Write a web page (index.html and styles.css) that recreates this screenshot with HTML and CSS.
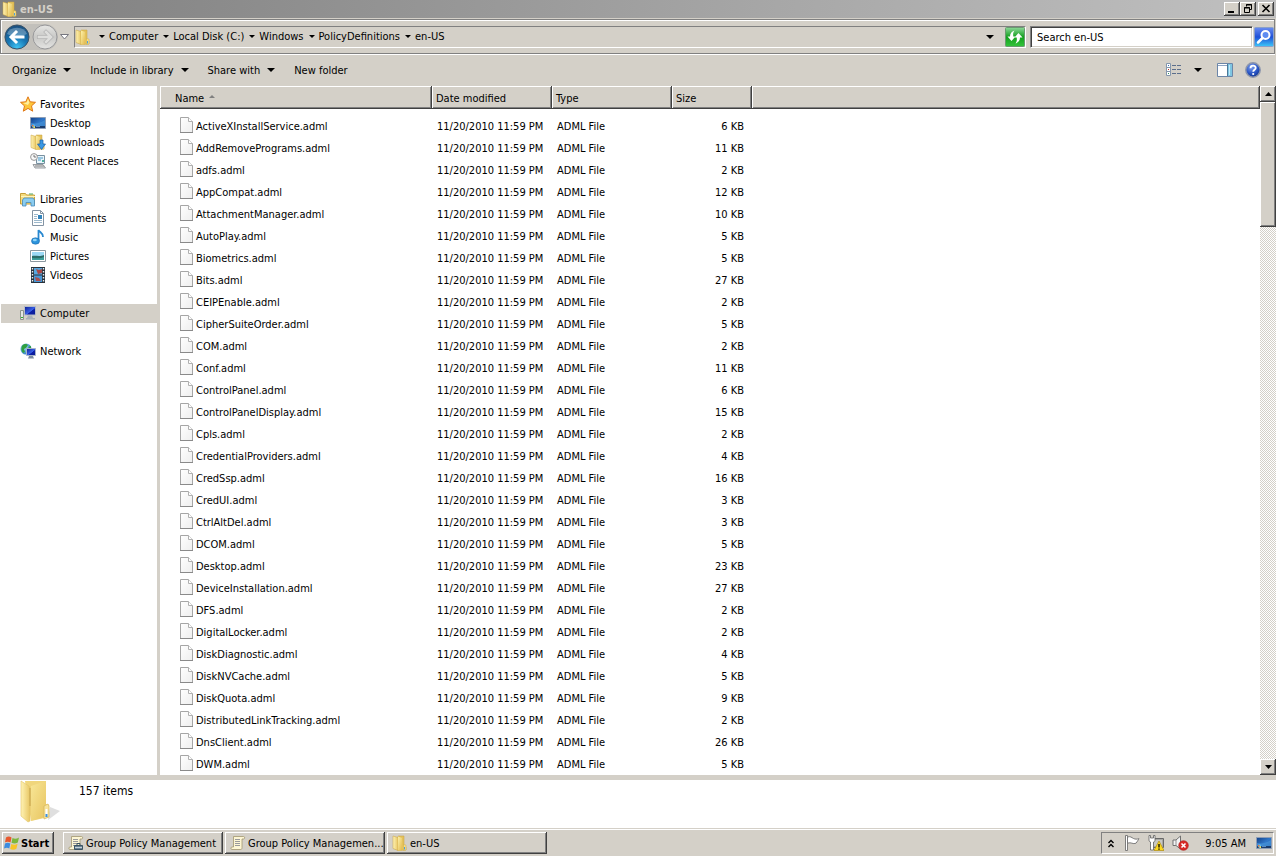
FILE: index.html
```html
<!DOCTYPE html>
<html lang="en">
<head>
<meta charset="utf-8">
<title>en-US</title>
<link rel="stylesheet" href="styles.css">
</head>
<body>
<svg class="defs" aria-hidden="true">
  <defs>
    <linearGradient id="gold" x1="0" y1="0" x2="1" y2="1"><stop offset="0" stop-color="#fdf1a8"/><stop offset="1" stop-color="#e2b94e"/></linearGradient>
    <linearGradient id="goldSide" x1="0" y1="0" x2="1" y2="0"><stop offset="0" stop-color="#fff3b4"/><stop offset="1" stop-color="#e8c765"/></linearGradient>
    <linearGradient id="paper" x1="0" y1="0" x2="1" y2="1"><stop offset="0" stop-color="#fff"/><stop offset="1" stop-color="#eeeeee"/></linearGradient>
    <linearGradient id="blueScreen" x1="0" y1="0" x2="1" y2="1"><stop offset="0" stop-color="#123f86"/><stop offset=".5" stop-color="#2f76c8"/><stop offset="1" stop-color="#174f9c"/></linearGradient>
    <linearGradient id="monitor" x1="0" y1="0" x2="1" y2="1"><stop offset="0" stop-color="#0a1a90"/><stop offset=".55" stop-color="#3a62e8"/><stop offset=".6" stop-color="#0c20a8"/><stop offset="1" stop-color="#0a1a90"/></linearGradient>
    <radialGradient id="backFill" cx=".5" cy=".95" r=".95"><stop offset="0" stop-color="#3fc4f4"/><stop offset=".45" stop-color="#1877b4"/><stop offset="1" stop-color="#1c4d7c"/></radialGradient>
    <linearGradient id="fwdFill" x1="0" y1="0" x2="0" y2="1"><stop offset="0" stop-color="#e6e6e4"/><stop offset=".5" stop-color="#c9c9c7"/><stop offset="1" stop-color="#e4e4e2"/></linearGradient>
    <linearGradient id="searchFill" x1="0" y1="0" x2="0" y2="1"><stop offset="0" stop-color="#6a8cf0"/><stop offset=".5" stop-color="#1e50d8"/><stop offset="1" stop-color="#3cc8f8"/></linearGradient>
    <linearGradient id="refreshFill" x1="0" y1="0" x2="0" y2="1"><stop offset="0" stop-color="#8ed89a"/><stop offset=".5" stop-color="#12a01c"/><stop offset="1" stop-color="#34c43c"/></linearGradient>
    <radialGradient id="helpFill" cx=".4" cy=".3" r=".8"><stop offset="0" stop-color="#7d9ff0"/><stop offset=".6" stop-color="#2450c0"/><stop offset="1" stop-color="#12307c"/></radialGradient>
    <radialGradient id="globe" cx=".35" cy=".35" r=".8"><stop offset="0" stop-color="#a8e0f8"/><stop offset="1" stop-color="#1468b8"/></radialGradient>
  </defs>
  <symbol id="doc" viewBox="0 0 16 16"><path d="M2.500.5h8l4 4v11h-12z" fill="url(#paper)" stroke="#a6a6a6"/><path d="M2 15.500h13" stroke="#8a8a8a"/><path d="M10.500.500v4h4" fill="#fff" stroke="#b0b0b0"/></symbol>
  <symbol id="folder" viewBox="0 0 16 16"><path d="M6 1h6v10l2 1v3l-8 .5z" fill="#e4c25c" stroke="#c9a33c" stroke-width=".5"/><path d="M1 1l5 1.500v13L1 13.500z" fill="url(#goldSide)" stroke="#c9a33c" stroke-width=".5"/><path d="M6 1.500L10 3v12.500H6z" fill="url(#gold)"/><path d="M11.500 9.500l2.500.5v5l-2.500.5z" fill="#f6de86" stroke="#c9a33c" stroke-width=".4"/><path d="M12.500 12v2.500" stroke="#4aa0e0"/></symbol>
  <symbol id="desktop" viewBox="0 0 16 16"><path d="M.5 2.500h15v11H.5z" fill="url(#blueScreen)" stroke="#8d9db5"/><path d="M1 8c5 1 9 0 14-3v6H1z" fill="#4a98dc" opacity=".65"/><path d="M1 11h14v2H1z" fill="#1b3c6c"/><path d="M6 11.500h4" stroke="#5b8bc0"/><circle cx="3.500" cy="11" r="1.800" fill="#58b8f0"/><path d="M2 10h1.500v1.500H2z" fill="#f07030"/><path d="M3.500 11.500H5V13H3.500z" fill="#ffe040"/></symbol>
  <symbol id="scroll" viewBox="0 0 16 16"><path d="M3.500 1.500h10c1.500 0 1.500 2.500 0 2.500H12v8.500c0 2-1 2-2 2H2c-1.500 0-1.500-2.500 0-2.500h1.500z" fill="#fdf6d4" stroke="#a19770" stroke-width=".8"/><path d="M5 4.500h5M5 6.500h5M5 8.500h5M5 10.500h5" stroke="#8f9095" stroke-width=".9"/></symbol>
  <symbol id="tri" viewBox="0 0 8 4"><path d="M0 0h8L4 4z" fill="#000"/></symbol>
</svg>

<header class="titlebar">
  <svg class="icon"><use href="#folder"/></svg>
  <h1 class="title">en-US</h1>
  <div class="controls">
    <button class="raised ctl" aria-label="Minimize"><svg width="10" height="9"><path d="M1 7h6v2H1z"/></svg></button>
    <button class="raised ctl" aria-label="Restore"><svg width="10" height="9"><path d="M3.500 2.500v-2h5v5h-2M3 1h6M1.500 3.500h5v5h-5zM1 4h6" fill="none" stroke="#000"/></svg></button>
    <button class="raised ctl ctl-close" aria-label="Close"><svg width="10" height="9"><path d="M1.500 1l7 7M8.500 1l-7 7" stroke="#000" stroke-width="1.600"/></svg></button>
  </div>
</header>

<nav class="navbar" aria-label="Address">
  <div class="travel">
    <button class="plain" aria-label="Back"><svg width="26" height="26"><circle cx="13" cy="13" r="12" fill="url(#backFill)" stroke="#3c5468"/><path d="M3 10a10.500 9 0 0 1 20 0q-10 5-20 0" fill="#fff" opacity=".28"/><path d="M7 13l5-5M7 13l5 5M8 13h11" fill="none" stroke="#fff" stroke-width="3" stroke-linecap="square"/></svg></button>
    <button class="plain" aria-label="Forward"><svg width="26" height="26"><circle cx="13" cy="13" r="12" fill="url(#fwdFill)" stroke="#98989a"/><path d="M19 13l-5-5M19 13l-5 5M18 13H7" fill="none" stroke="#b4b4b4" stroke-width="4" stroke-linecap="square"/><path d="M19 13l-5-5M19 13l-5 5M18 13H7" fill="none" stroke="#dededc" stroke-width="2.500" stroke-linecap="square"/></svg></button>
  </div>
  <button class="plain" aria-label="Recent pages"><svg width="9" height="6"><path d="M.5.5h8l-4 4.500z" fill="#fff" stroke="#77777f"/></svg></button>
  <div class="address">
    <svg class="icon"><use href="#folder"/></svg>
    <ol class="crumbs">
      <li><a href="#">Computer</a></li>
      <li><a href="#">Local Disk (C:)</a></li>
      <li><a href="#">Windows</a></li>
      <li><a href="#">PolicyDefinitions</a></li>
      <li><a href="#">en-US</a></li>
    </ol>
    <button class="plain" aria-label="Previous locations"><svg class="tri"><use href="#tri"/></svg></button>
    <button class="plain" aria-label="Refresh"><svg width="20" height="20"><rect x=".5" y=".5" width="19" height="19" rx="1" fill="url(#refreshFill)" stroke="#6a9a70"/><path d="M6.500 14L2.500 9.500h2.500c0-3 1.500-5 4.500-6-1.500 2-1.500 3.500-1.200 6h2.200z" fill="#fff"/><path d="M13.500 6l4 4.500H15c0 3-1.500 5-4.500 6 1.500-2 1.500-3.500 1.200-6H9.500z" fill="#fff"/></svg></button>
  </div>
  <form class="search">
    <input class="search-box" type="text" aria-label="Search en-US" placeholder="Search en-US">
    <button class="plain" type="button" aria-label="Search"><svg width="20" height="20"><rect x=".5" y=".5" width="19" height="19" rx="1" fill="url(#searchFill)" stroke="#8aa0c8"/><circle cx="11.500" cy="8" r="4" fill="#5e8cf0" stroke="#fff" stroke-width="2"/><path d="M8.500 11l-4.500 4.500" stroke="#fff" stroke-width="2.500" stroke-linecap="round"/></svg></button>
  </form>
</nav>

<div class="toolbar" role="toolbar">
  <button class="plain cmd">Organize <svg class="tri"><use href="#tri"/></svg></button>
  <button class="plain cmd">Include in library <svg class="tri"><use href="#tri"/></svg></button>
  <button class="plain cmd">Share with <svg class="tri"><use href="#tri"/></svg></button>
  <button class="plain cmd">New folder</button>
  <div class="views">
    <button class="plain" aria-label="Change view"><svg width="16" height="14"><path d="M.5.5h4v4h-4zM.5 4.500h4v4h-4zM.5 8.500h4v4h-4z" fill="#fff" stroke="#8496ac"/><path d="M2 2h1v1H2z" fill="#3070c0"/><path d="M2 6h1v1H2z" fill="#c03020"/><path d="M2 10h1v1H2z" fill="#309060"/><path d="M6 2.500h4M11 2.500h4M6 6.500h4M11 6.500h4M6 10.500h4M11 10.500h4" stroke="#5c6f8c"/></svg></button>
    <button class="plain" aria-label="More view options"><svg class="tri"><use href="#tri"/></svg></button>
    <button class="plain preview" aria-label="Preview pane"><svg width="16" height="14"><path d="M.5.5h15v13H.5z" fill="#fff" stroke="#6c86a8"/><path d="M1 2.500h9" stroke="#8fa6c4"/><path d="M10.500 1H15v12h-4.500z" fill="#7fc6e2"/><path d="M10.500 1v12" stroke="#4c7898"/><path d="M12.500 2v10" stroke="#c4eafa"/></svg></button>
    <button class="plain" aria-label="Help"><svg width="16" height="16"><circle cx="8" cy="8" r="7.200" fill="url(#helpFill)" stroke="#8d96ac" stroke-width="1.500"/><path d="M5.500 6.200c0-3.400 5.200-3.200 5.200-.3 0 1.900-2.500 1.900-2.500 3.900" fill="none" stroke="#fff" stroke-width="1.800"/><circle cx="8.200" cy="12" r="1.100" fill="#fff"/></svg></button>
  </div>
</div>

<main class="main">
  <aside class="sidebar">
    <ul class="tree">
      <li><a href="#"><svg class="icon" viewBox="0 0 16 16"><path d="M8 .8l2.200 5 5.300.5-4 3.600 1.200 5.300L8 12.400l-4.700 2.800 1.200-5.300-4-3.600 5.300-.5z" fill="#fdc63c" stroke="#e07818"/><path d="M8 3l1.400 3.600L8 9 3 7l3.600-.6z" fill="#fff0a0"/></svg>Favorites</a>
        <ul>
          <li><a href="#"><svg class="icon"><use href="#desktop"/></svg>Desktop</a></li>
          <li><a href="#"><svg class="icon" viewBox="0 0 16 16"><use href="#folder"/><path d="M10 6h3v4h2.500l-4 5.500-4-5.500H10z" fill="#3a98e4" stroke="#1c60a8" stroke-width=".7"/></svg>Downloads</a></li>
          <li><a href="#"><svg class="icon" viewBox="0 0 16 16"><path d="M6.500 2.500h8v8h-8z" fill="#e8f4fa" stroke="#7890a0"/><path d="M8 5h5M8 7h3" stroke="#4898c8"/><path d="M12 7h2v2h-2z" fill="#50b0a0"/><path d="M3 11.500h10l2.500 3.500H5z" fill="#dfe2e4" stroke="#84898e" stroke-width=".8"/><path d="M5 13h9" stroke="#888"/><circle cx="4" cy="4" r="3.400" fill="#f8f8f8" stroke="#989898"/><path d="M4 2v2h2" fill="none" stroke="#555" stroke-width=".8"/></svg>Recent Places</a></li>
        </ul>
      </li>
      <li><a href="#"><svg class="icon" viewBox="0 0 16 16"><path d="M.5 2.500h5l1 1.500h8v9h-14z" fill="#f4dc80" stroke="#c8a038"/><path d="M1 5.500h14" stroke="#fff4bc"/><path d="M9 3h4" stroke="#50a860"/><path d="M2.500 15V9l1.500-2h9l1.500 2v6H11v-3.500H6V15z" fill="#8accf0" stroke="#4688b8" stroke-width=".8"/></svg>Libraries</a>
        <ul>
          <li><a href="#"><svg class="icon" viewBox="0 0 16 16"><path d="M2.500.5h8l3 3v12h-11z" fill="#fff" stroke="#8494a4"/><path d="M10.500.5v3h3" fill="none" stroke="#8494a4"/><path d="M4 4.500h4M4 6.500h3M4 8.500h3M4 10.500h8M4 12.500h8" stroke="#9cb8cc"/><path d="M8 5h4v4H8z" fill="#3484bc"/></svg>Documents</a></li>
          <li><a href="#"><svg class="icon" viewBox="0 0 16 16"><path d="M8.500 11.500V1c1 2.500 5 3 4.500 7" fill="none" stroke="#2888d0" stroke-width="1.800"/><ellipse cx="5.500" cy="12" rx="4" ry="3.200" fill="#2c94dc" stroke="#1868ac" stroke-width=".6"/><ellipse cx="4.800" cy="11" rx="2" ry="1.200" fill="#90d4f8"/></svg>Music</a></li>
          <li><a href="#"><svg class="icon" viewBox="0 0 16 16"><path d="M.5 2.500h15v11H.5z" fill="#fff" stroke="#8c98a0"/><path d="M2 4h12v8H2z" fill="#9cd8f4"/><path d="M2 8c4-1 7 1 12-1v5H2z" fill="#2c6c68"/><path d="M2 10c4 0 8 1 12-1v3H2z" fill="#3ca09c"/></svg>Pictures</a></li>
          <li><a href="#"><svg class="icon" viewBox="0 0 16 16"><path d="M1 0h14v16H1z" fill="#28323c"/><path d="M4 1h8v6.500H4z" fill="#58a8e0"/><path d="M4 8.500h8V15H4z" fill="#4898d8"/><path d="M6 2l3 1 3-1v4l-4 1z" fill="#a84848"/><path d="M5 10l4 1 2 3H6z" fill="#a85050"/><path d="M2.500 1v14M13.500 1v14" stroke="#e8f0f4" stroke-width="1.400" stroke-dasharray="1.500 1.500"/></svg>Videos</a></li>
        </ul>
      </li>
      <li><a href="#" class="current" aria-current="true"><svg class="icon" viewBox="0 0 16 16"><path d="M.5 5.500h3v9h-3z" fill="#e4e8e4" stroke="#8c948c"/><path d="M1 12h2v1H1z" fill="#30b030"/><path d="M4.500 1.500h11v8.500h-11z" fill="url(#monitor)" stroke="#b4bcc8"/><path d="M8 10.500h4l1 2.500h2v1.500H6V13h1z" fill="#a8b0b8"/></svg>Computer</a></li>
      <li><a href="#"><svg class="icon" viewBox="0 0 16 16"><circle cx="6" cy="6" r="5.500" fill="url(#globe)"/><path d="M2 3c2-3 5-2 6-1L6 5l-2 1 1 3-2 1C1 8 1 5 2 3zM8 4l3-1v4z" fill="#30a040"/><path d="M6.500 5.500h9v7h-9z" fill="url(#monitor)" stroke="#a8b4c8"/><path d="M9 13h4l1 2.500H8z" fill="#7c8ca0"/></svg>Network</a></li>
    </ul>
  </aside>

  <section class="files">
    <table class="list">
      <colgroup><col class="c-name"><col class="c-date"><col class="c-type"><col class="c-size"><col></colgroup>
      <thead>
        <tr><th class="raised h-name">Name <svg class="sort" viewBox="0 0 6 3"><path d="M0 3h6L3 0z" fill="#808080"/></svg></th><th class="raised">Date modified</th><th class="raised">Type</th><th class="raised">Size</th><td class="raised"></td></tr>
      </thead>
      <tbody>
        <tr><td><svg class="icon"><use href="#doc"/></svg>ActiveXInstallService.adml</td><td>11/20/2010 11:59 PM</td><td>ADML File</td><td>6 KB</td></tr>
        <tr><td><svg class="icon"><use href="#doc"/></svg>AddRemovePrograms.adml</td><td>11/20/2010 11:59 PM</td><td>ADML File</td><td>11 KB</td></tr>
        <tr><td><svg class="icon"><use href="#doc"/></svg>adfs.adml</td><td>11/20/2010 11:59 PM</td><td>ADML File</td><td>2 KB</td></tr>
        <tr><td><svg class="icon"><use href="#doc"/></svg>AppCompat.adml</td><td>11/20/2010 11:59 PM</td><td>ADML File</td><td>12 KB</td></tr>
        <tr><td><svg class="icon"><use href="#doc"/></svg>AttachmentManager.adml</td><td>11/20/2010 11:59 PM</td><td>ADML File</td><td>10 KB</td></tr>
        <tr><td><svg class="icon"><use href="#doc"/></svg>AutoPlay.adml</td><td>11/20/2010 11:59 PM</td><td>ADML File</td><td>5 KB</td></tr>
        <tr><td><svg class="icon"><use href="#doc"/></svg>Biometrics.adml</td><td>11/20/2010 11:59 PM</td><td>ADML File</td><td>5 KB</td></tr>
        <tr><td><svg class="icon"><use href="#doc"/></svg>Bits.adml</td><td>11/20/2010 11:59 PM</td><td>ADML File</td><td>27 KB</td></tr>
        <tr><td><svg class="icon"><use href="#doc"/></svg>CEIPEnable.adml</td><td>11/20/2010 11:59 PM</td><td>ADML File</td><td>2 KB</td></tr>
        <tr><td><svg class="icon"><use href="#doc"/></svg>CipherSuiteOrder.adml</td><td>11/20/2010 11:59 PM</td><td>ADML File</td><td>5 KB</td></tr>
        <tr><td><svg class="icon"><use href="#doc"/></svg>COM.adml</td><td>11/20/2010 11:59 PM</td><td>ADML File</td><td>2 KB</td></tr>
        <tr><td><svg class="icon"><use href="#doc"/></svg>Conf.adml</td><td>11/20/2010 11:59 PM</td><td>ADML File</td><td>11 KB</td></tr>
        <tr><td><svg class="icon"><use href="#doc"/></svg>ControlPanel.adml</td><td>11/20/2010 11:59 PM</td><td>ADML File</td><td>6 KB</td></tr>
        <tr><td><svg class="icon"><use href="#doc"/></svg>ControlPanelDisplay.adml</td><td>11/20/2010 11:59 PM</td><td>ADML File</td><td>15 KB</td></tr>
        <tr><td><svg class="icon"><use href="#doc"/></svg>Cpls.adml</td><td>11/20/2010 11:59 PM</td><td>ADML File</td><td>2 KB</td></tr>
        <tr><td><svg class="icon"><use href="#doc"/></svg>CredentialProviders.adml</td><td>11/20/2010 11:59 PM</td><td>ADML File</td><td>4 KB</td></tr>
        <tr><td><svg class="icon"><use href="#doc"/></svg>CredSsp.adml</td><td>11/20/2010 11:59 PM</td><td>ADML File</td><td>16 KB</td></tr>
        <tr><td><svg class="icon"><use href="#doc"/></svg>CredUI.adml</td><td>11/20/2010 11:59 PM</td><td>ADML File</td><td>3 KB</td></tr>
        <tr><td><svg class="icon"><use href="#doc"/></svg>CtrlAltDel.adml</td><td>11/20/2010 11:59 PM</td><td>ADML File</td><td>3 KB</td></tr>
        <tr><td><svg class="icon"><use href="#doc"/></svg>DCOM.adml</td><td>11/20/2010 11:59 PM</td><td>ADML File</td><td>5 KB</td></tr>
        <tr><td><svg class="icon"><use href="#doc"/></svg>Desktop.adml</td><td>11/20/2010 11:59 PM</td><td>ADML File</td><td>23 KB</td></tr>
        <tr><td><svg class="icon"><use href="#doc"/></svg>DeviceInstallation.adml</td><td>11/20/2010 11:59 PM</td><td>ADML File</td><td>27 KB</td></tr>
        <tr><td><svg class="icon"><use href="#doc"/></svg>DFS.adml</td><td>11/20/2010 11:59 PM</td><td>ADML File</td><td>2 KB</td></tr>
        <tr><td><svg class="icon"><use href="#doc"/></svg>DigitalLocker.adml</td><td>11/20/2010 11:59 PM</td><td>ADML File</td><td>2 KB</td></tr>
        <tr><td><svg class="icon"><use href="#doc"/></svg>DiskDiagnostic.adml</td><td>11/20/2010 11:59 PM</td><td>ADML File</td><td>4 KB</td></tr>
        <tr><td><svg class="icon"><use href="#doc"/></svg>DiskNVCache.adml</td><td>11/20/2010 11:59 PM</td><td>ADML File</td><td>5 KB</td></tr>
        <tr><td><svg class="icon"><use href="#doc"/></svg>DiskQuota.adml</td><td>11/20/2010 11:59 PM</td><td>ADML File</td><td>9 KB</td></tr>
        <tr><td><svg class="icon"><use href="#doc"/></svg>DistributedLinkTracking.adml</td><td>11/20/2010 11:59 PM</td><td>ADML File</td><td>2 KB</td></tr>
        <tr><td><svg class="icon"><use href="#doc"/></svg>DnsClient.adml</td><td>11/20/2010 11:59 PM</td><td>ADML File</td><td>26 KB</td></tr>
        <tr><td><svg class="icon"><use href="#doc"/></svg>DWM.adml</td><td>11/20/2010 11:59 PM</td><td>ADML File</td><td>5 KB</td></tr>
      </tbody>
    </table>
  </section>

  <div class="scrollbar">
    <button class="raised step" aria-label="Scroll up"><svg width="7" height="4"><path d="M0 4h7L3.500 0z"/></svg></button>
    <div class="track"><div class="raised thumb"></div></div>
    <button class="raised step" aria-label="Scroll down"><svg width="7" height="4"><path d="M0 0h7L3.500 4z"/></svg></button>
  </div>
</main>

<section class="details">
  <svg width="42" height="44" viewBox="0 0 42 44"><path d="M28 40l12-9-10-4z" fill="#c0c0c0" opacity=".5"/><path d="M5 1h21v23l3 1v12l-18 4z" fill="#f0d67c"/><path d="M11 6L26 1v23l-1 13-14 4z" fill="url(#gold)" opacity=".6"/><path d="M1 1l8 5 1 2v33l-2 1-7-6z" fill="url(#goldSide)" stroke="#e2c468" stroke-width=".6"/><path d="M10 8v18" stroke="#c4a24c"/><path d="M24 26l4-2 1 2v11l-5 2z" fill="#f8e49c" stroke="#d4b45c" stroke-width=".7"/><path d="M26.500 29v7" stroke="#fff" stroke-width="2"/><path d="M26.500 34v3" stroke="#3c90e0" stroke-width="2"/></svg>
  <p class="count">157 items</p>
</section>

<footer class="taskbar">
  <button class="raised start"><svg width="16" height="16" viewBox="0 0 16 16"><path d="M2 2.500c2-1.500 4-1 5.500 0L6.500 7.500C5 6.500 3 6.300 1 7.300z" fill="#e8582c"/><path d="M8.500 3c2 1 4 1 6.500-.5L13.800 7.500c-2 1.200-4 1.200-6.300.3z" fill="#7cb83c"/><path d="M1 8.500c2-1 3.700-.9 5.300 0l-1 5C3.800 12.500 2 12.500 0 13.500z" fill="#3c8ce0"/><path d="M7.300 9c2 1 4 1 6.300-.3l-1.200 5c-2 1.300-4 1.200-6.200.2z" fill="#f8c428"/></svg>Start</button>
  <div class="tasks">
    <button class="raised task"><svg class="icon" viewBox="0 0 16 16"><use href="#scroll"/><path d="M6.500 10.500h8v4h-8z" fill="#6c8494" stroke="#3c5464"/><path d="M9 10V8.500h3V10" fill="none" stroke="#3c5464"/><path d="M7 12.500h7" stroke="#c4d0d8"/></svg>Group Policy Management</button>
    <button class="raised task"><svg class="icon"><use href="#scroll"/></svg>Group Policy Managemen...</button>
    <button class="raised task"><svg class="icon"><use href="#folder"/></svg>en-US</button>
  </div>
  <div class="tray">
    <button class="plain" aria-label="Show hidden icons"><svg width="6" height="9"><path d="M.5 4L3 1.500 5.500 4M.5 8L3 5.500 5.500 8" fill="none" stroke="#000" stroke-width="1.400"/></svg></button>
    <div class="tray-icons">
      <svg width="16" height="16"><path d="M1.500.5h2v15h-2z" fill="#fff" stroke="#707070" stroke-width=".9"/><path d="M3.500 2c3-1 4 .5 6 1.500 2 .8 3 .8 5.500.2-1 1.500-1.500 2.500-3 4.500-3 1.500-5-1.500-8.500 0z" fill="#fff" stroke="#707070" stroke-width=".9"/></svg>
      <svg width="16" height="16"><path d="M4.500 3.500h11v9h-11z" fill="#a8a8a4" stroke="#686868"/><path d="M6 5h8v6H6z" fill="#c8c8c4"/><path d="M1 .5v4.500c0 1.500 1 2 1.500 2V15h3V7c1 0 1.500-.5 1.500-2V.5H5.500V3h-3V.5z" fill="#fff" stroke="#606060" stroke-width=".8"/><path d="M11 6l5 9.500H6z" fill="#fcd820" stroke="#b08c10" stroke-width=".7"/><path d="M11 9v3.500M11 13.500v1.300" stroke="#000" stroke-width="1.300"/></svg>
      <svg width="17" height="16"><path d="M1 5h3l4.500-4v13L4 10.500H1z" fill="#f4f4f4" stroke="#707070"/><path d="M4 5v5.500" stroke="#909090"/><circle cx="11.500" cy="10.500" r="4.800" fill="#d82c28" stroke="#a81818" stroke-width=".6"/><path d="M9.500 8.500l4 4M13.500 8.500l-4 4" stroke="#fff" stroke-width="1.600"/></svg>
    </div>
    <time class="clock">9:05 AM</time>
    <svg class="icon"><use href="#desktop"/></svg>
  </div>
</footer>
</body>
</html>
```
FILE: styles.css
```css
* { box-sizing: border-box; }

:root {
  --face: #d4d0c8;
  --shade: #808080;
  --dark: #404040;
}

body {
  margin: 0;
  height: 100vh;
  display: flex;
  flex-direction: column;
  overflow: hidden;
  background: var(--face);
  color: #000;
  font: 11px/15px "DejaVu Sans Condensed", "DejaVu Sans", sans-serif;
}

button, input { font: inherit; color: inherit; padding: 0; border: 0; border-radius: 0; }
a { color: inherit; text-decoration: none; }
ul, ol { margin: 0; padding: 0; list-style: none; }
svg { display: block; flex: none; }

.defs { position: absolute; width: 0; height: 0; }
.icon { width: 16px; height: 16px; }
.tri { width: 8px; height: 4px; }
.plain { background: none; display: flex; align-items: center; white-space: nowrap; }
.raised {
  background: var(--face);
  box-shadow: inset -1px -1px var(--dark), inset 1px 1px #fff, inset -2px -2px var(--shade);
}

/* Title bar */
.titlebar {
  flex: none;
  height: 19px;
  display: flex;
  align-items: center;
  gap: 2px;
  padding: 0 2px;
  background: linear-gradient(to right, #808080, #c0c0c0);
  border-bottom: 1px solid var(--face);
}
.title { margin: 0; flex: 1; font-size: 11px; font-weight: bold; color: var(--face); }
.controls { display: flex; }
.ctl { width: 16px; height: 14px; display: flex; justify-content: center; padding-top: 2px; }
.ctl-close { margin-left: 2px; }

/* Address row */
.navbar {
  flex: none;
  display: flex;
  align-items: center;
  height: 35px;
  padding-left: 3px;
  margin-right: 1px;
  border: 1px solid var(--shade);
  box-shadow: inset 1px 1px #fff, 0 1px #fff;
}
.travel { display: flex; gap: 2px; margin-right: 2px; border-radius: 13px; background: #c2c0bb; }
.address {
  flex: 1;
  display: flex;
  align-items: center;
  height: 22px;
  margin: 0 4px 0 5px;
  border: 1px solid;
  border-color: var(--shade) #fff #fff var(--shade);
}
.crumbs { flex: 1; display: flex; padding-left: 8px; }
.crumbs li { display: flex; align-items: center; }
.crumbs li::before {
  content: "";
  border: 3px solid transparent;
  border-top-color: #000;
  border-bottom: 0;
  margin: 0 4px 0 5px;
}
.crumbs li:first-child::before { margin-left: 0; }
.address .tri { margin-right: 11px; }
.search { display: flex; align-items: center; gap: 1px; width: 244px; }
.search-box {
  flex: 1;
  min-width: 0;
  height: 22px;
  padding: 1px 6px 0;
  background: #fff;
  border: 1px solid;
  border-color: var(--shade) #fff #fff var(--shade);
  box-shadow: inset 1px 1px var(--dark), inset -1px -1px var(--face);
}
.search-box::placeholder { color: #000; opacity: 1; }

/* Command bar */
.toolbar { flex: none; height: 32px; display: flex; align-items: center; gap: 19px; padding: 0 15px 0 12px; }
.cmd { gap: 7px; }
.views { margin-left: auto; display: flex; align-items: center; gap: 12px; }
.preview { margin-left: 3px; }

/* Panes */
.main { flex: 1; min-height: 0; display: flex; }
.sidebar { flex: none; width: 157px; margin-right: 3px; padding: 9px 0 0 1px; background: #fff; overflow: hidden; }
.tree { display: flex; flex-direction: column; gap: 19px; }
.tree a { display: flex; align-items: center; gap: 4px; height: 19px; padding-left: 19px; }
.tree ul a { padding-left: 29px; }
.tree .icon { margin-bottom: 1px; }
.tree .current { background: var(--face); }

.files { flex: 1; min-width: 0; overflow: hidden; background: #fff; }
.list { width: 100%; table-layout: fixed; border-collapse: collapse; white-space: nowrap; }
.c-name { width: 272px; }
.c-date, .c-type { width: 120px; }
.c-size { width: 80px; }
.list th { height: 23px; padding: 1px 4px 0; text-align: left; font-weight: normal; }
.list .h-name { padding-left: 15px; }
.sort { display: inline-block; width: 6px; height: 3px; margin: 0 0 4px 2px; }
.list tbody::before { content: ""; display: block; height: 6px; }
.list tbody td { height: 22px; padding: 1px 5px 0; }
.list tbody td:first-child { display: flex; align-items: center; gap: 2px; padding-left: 18px; }
.list tbody td:nth-child(4) { text-align: right; padding-right: 8px; }
.list tbody .icon { margin-bottom: 3px; }

.scrollbar {
  flex: none;
  width: 16px;
  display: flex;
  flex-direction: column;
}
.step { flex: none; height: 16px; display: grid; place-items: center; }
.track { flex: 1; background: repeating-conic-gradient(#fff 0 25%, var(--face) 0 50%) 0 0 / 2px 2px; }
.thumb { height: 19%; }

/* Details pane */
.details { flex: none; height: 48px; display: flex; gap: 17px; margin-top: 5px; padding-left: 20px; background: #fff; }
.count { margin: 4px 0 0; font-size: 12px; }

/* Task bar */
.taskbar { flex: none; height: 28px; display: flex; align-items: center; padding: 1px 2px 0; border-top: 1px solid var(--face); box-shadow: inset 0 1px #fff; }
.start { display: flex; align-items: center; gap: 1px; height: 22px; width: 52px; padding-left: 2px; font-weight: bold; }
.tasks { flex: 1; min-width: 0; display: flex; gap: 2px; margin-left: 9px; }
.task { display: flex; align-items: center; gap: 2px; width: 160px; height: 22px; padding: 0 2px 0 5px; white-space: nowrap; }
.tray { display: flex; align-items: center; height: 22px; padding: 0 1px 0 6px; border: 1px solid; border-color: var(--shade) #fff #fff var(--shade); }
.tray-icons { display: flex; gap: 8px; margin: 0 16px 0 10px; }
.clock { margin-right: 10px; }
```
